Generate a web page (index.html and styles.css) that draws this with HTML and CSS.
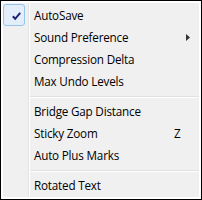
FILE: index.html
```html
<!DOCTYPE html>
<html>
<head>
<meta charset="utf-8">
<link rel="stylesheet" href="styles.css">
</head>
<body>
<div class="menu">
  <div class="inner">
    <div class="item">
      <svg class="tickbox" width="22" height="22" viewBox="0 0 22 22">
        <rect x="0.5" y="0.5" width="21" height="21" rx="2.5" fill="#e3eefa" stroke="#95c3ec"/>
        <path d="M9.8 12.2 L12.2 14.8 L17.2 8.8" fill="none" stroke="#1b2377" stroke-width="2"/>
      </svg>
      <span class="label">AutoSave</span>
    </div>
    <div class="item">
      <span></span>
      <span class="label">Sound Preference</span>
      <span></span>
      <svg class="arrow" width="4" height="7" viewBox="0 0 4 7"><polygon points="0,0 4,3.5 0,7" fill="#333"/></svg>
    </div>
    <div class="item"><span></span><span class="label">Compression Delta</span></div>
    <div class="item"><span></span><span class="label">Max Undo Levels</span></div>
    <div class="sep"></div>
    <div class="item"><span></span><span class="label">Bridge Gap Distance</span></div>
    <div class="item"><span></span><span class="label">Sticky Zoom</span><span class="key">Z</span></div>
    <div class="item"><span></span><span class="label">Auto Plus Marks</span></div>
    <div class="sep"></div>
    <div class="item"><span></span><span class="label">Rotated Text</span></div>
  </div>
</div>
</body>
</html>
```
FILE: styles.css
```css
html, body {
  margin: 0;
  padding: 0;
  background: #fff;
}
.menu {
  width: 202px;
  height: 200px;
  box-sizing: border-box;
  border: 1px solid #000;
  padding: 2px;
  background: #fff;
  font-family: "Open Sans", "Noto Sans", sans-serif;
  font-size: 11.7px;
  letter-spacing: -0.2px;
  color: #000;
}
.inner {
  height: 100%;
  box-sizing: border-box;
  padding-top: 1px;
  background-color: #f0f0f0;
  background-image: linear-gradient(to right, transparent 25px, #e2e3e3 25px, #e2e3e3 26px, #ffffff 26px, #ffffff 27px, transparent 27px);
}
.item {
  display: grid;
  grid-template-columns: 31px 140px 12px 13px;
  height: 22px;
  align-items: center;
}
.label {
  white-space: nowrap;
  line-height: 22px;
}
.key {
  line-height: 22px;
}
.tickbox {
  display: block;
}
.arrow {
  display: block;
}
.sep {
  height: 8px;
  box-sizing: border-box;
  margin-left: 27px;
  padding-top: 4px;
}
.sep::before {
  content: "";
  display: block;
  height: 1px;
  background: #e0e0e0;
  border-bottom: 1px solid #ffffff;
}
```
